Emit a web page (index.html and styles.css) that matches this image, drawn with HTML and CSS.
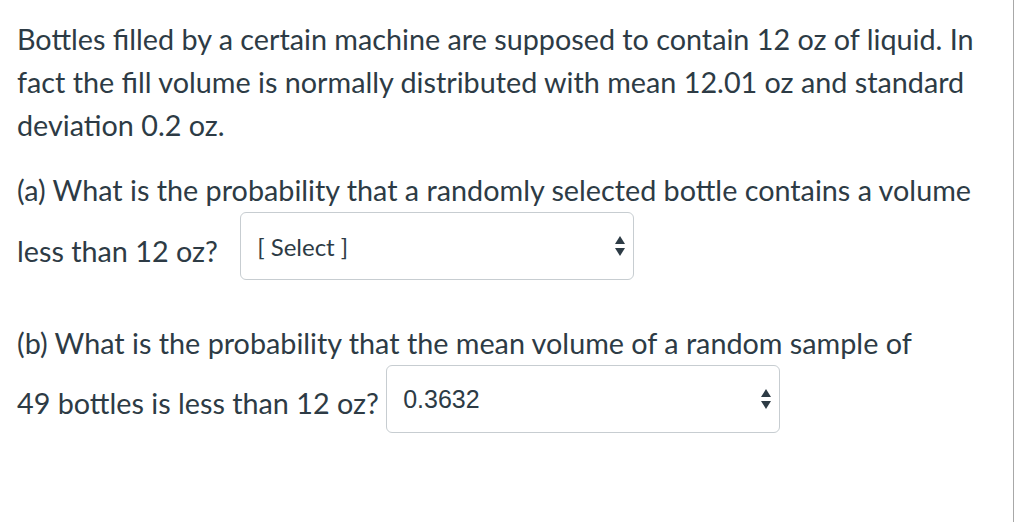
FILE: index.html
```html
<!DOCTYPE html>
<html lang="en">
<head>
<meta charset="utf-8">
<title>Question</title>
<link rel="stylesheet" href="styles.css">
</head>
<body>
<div class="page">
  <div class="question">
    <p class="para">Bottles filled by a certain machine are supposed to contain 12 oz of liquid. In fact the fill volume is normally distributed with mean 12.01 oz and standard deviation 0.2 oz.</p>
    <p class="para">(a) What is the probability that a randomly selected bottle contains a volume less than 12 oz? <span class="select select-gap"><span class="select-text">[ Select ]</span><svg class="arrows" width="10" height="21" viewBox="0 0 10 21"><path d="M5 0 L10 8 L0 8 Z M0 12 L10 12 L5 20 Z" fill="#2d3b45"/></svg></span></p>
    <p class="para">(b) What is the probability that the mean volume of a random sample of<br>49 bottles is less than 12 oz? <span class="select"><span class="select-text select-value">0.3632</span><svg class="arrows" width="10" height="21" viewBox="0 0 10 21"><path d="M5 0 L10 8 L0 8 Z M0 12 L10 12 L5 20 Z" fill="#2d3b45"/></svg></span></p>
  </div>
</div>
</body>
</html>
```
FILE: styles.css
```css
html, body {
  margin: 0;
  padding: 0;
  background: #ffffff;
}

.page {
  width: 1014px;
  height: 522px;
  box-sizing: border-box;
  border-right: 1px solid #a8a8a8;
  padding: 18px 0 0 17px;
}

.question {
  width: 985px;
  font-family: Lato, "Open Sans", sans-serif;
  font-size: 28.75px;
  line-height: 43px;
  color: #2d3b45;
}

.para {
  margin: 0 0 22px 0;
}

.select {
  display: inline-flex;
  align-items: center;
  justify-content: space-between;
  box-sizing: border-box;
  width: 394px;
  height: 68px;
  padding: 0 8px 0 16px;
  border: 1px solid #c7cdd1;
  border-radius: 6px;
  background: #ffffff;
  vertical-align: 6px;
  margin-bottom: 20px;
}

.select-gap {
  margin-left: 15px;
}

.select-text {
  line-height: normal;
  font-family: Lato, sans-serif;
  font-size: 24px;
  color: #2d3b45;
}

.select-value {
  font-family: "Liberation Sans", Arial, sans-serif;
  font-size: 25px;
}

.arrows {
  display: block;
  flex: none;
}
```
